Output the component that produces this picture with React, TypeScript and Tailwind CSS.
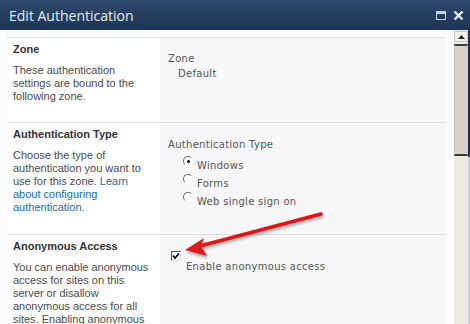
import React from 'react';

const leftFont = { fontFamily: '"Liberation Sans", Arial, sans-serif' };
const rightFont = { fontFamily: '"DejaVu Sans", Verdana, sans-serif' };

function Radio({ checked }: { checked?: boolean }) {
  return (
    <span className="relative inline-block shrink-0 w-[10px] h-[10px] rounded-full border border-t-[#6d6d6d] border-l-[#6d6d6d] border-r-white border-b-white bg-white">
      {checked && <span className="absolute left-[2.5px] top-[2.5px] w-[3px] h-[3px] rounded-full bg-black" />}
    </span>
  );
}

function Section({
  title,
  children,
  right,
  height,
}: {
  title: string;
  children: React.ReactNode;
  right: React.ReactNode;
  height: string;
}) {
  return (
    <div className={`flex border-t border-[#dedede] ${height}`}>
      <div className="w-[153px] pl-[6px] pr-2 pt-[4px]" style={leftFont}>
        <div className="text-[11px] font-bold text-[#333] leading-[14px]">{title}</div>
        <div className="mt-[8px] text-[11px] text-[#4a4a4a] leading-[13px]">{children}</div>
      </div>
      <div className="flex-1 bg-[#f7f6f8] pl-[8px] pt-[13px] text-[10px] text-[#555] tracking-[0.3px]" style={rightFont}>
        {right}
      </div>
    </div>
  );
}

export default function App() {
  return (
    <div className="relative w-[470px] h-[324px] overflow-hidden bg-white flex flex-col">
      {/* title bar */}
      <div className="h-[30px] flex items-center justify-between pl-[9px] pr-[6px] bg-gradient-to-b from-[#2e4a6f] to-[#1d3454]">
        <span className="text-[14px] text-[#e6ecf3]" style={{ fontFamily: '"Open Sans", Arial, sans-serif' }}>
          Edit Authentication
        </span>
        <div className="flex items-center gap-[7px]">
          <span className="w-[10px] h-[9px] border border-[#c8d2de] border-t-[3px]" />
          <svg width="11" height="11" viewBox="0 0 11 11">
            <path d="M1.5 1.5 L9.5 9.5 M9.5 1.5 L1.5 9.5" stroke="#e8eef5" strokeWidth="2.4" />
          </svg>
        </div>
      </div>

      <div className="flex flex-1 min-h-0">
        <div className="flex-1 pl-[7px] pr-[8px] pt-[7px] bg-[#f9fbfd]">
          <div className="bg-white">
            <Section title="Zone" height="h-[85px]" right={
              <div className="leading-[15px]">
                <div>Zone</div>
                <div className="pl-[10px]">Default</div>
              </div>
            }>
              These authentication settings are bound to the following zone.
            </Section>
            <Section title="Authentication Type" height="h-[112px]" right={
              <div className="mt-[2px]">
                <div className="leading-[14px]">Authentication Type</div>
                <div className="pl-[15px] mt-[4px] flex flex-col gap-[4px]">
                  {[['Windows', true], ['Forms', false], ['Web single sign on', false]].map(([l, c]) => (
                    <div key={l as string} className="flex items-start gap-[4px] h-[14px]">
                      <Radio checked={c as boolean} />
                      <span className="mt-[4px] leading-[12px]">{l}</span>
                    </div>
                  ))}
                </div>
              </div>
            }>
              <div>Choose the type of authentication you want to</div>
              <div className="flex gap-[3px]">
                <span>use for this zone.</span>
                <span className="text-[#1e6aa3]">Learn</span>
              </div>
              <div className="text-[#1e6aa3]">about configuring authentication.</div>
            </Section>
            <Section title="Anonymous Access" height="h-[100px]" right={
              <div className="mt-[1px] pl-[3px]">
                <span className="inline-flex items-center justify-center w-[10px] h-[10px] border border-t-[#555] border-l-[#555] border-r-[#ddd] border-b-[#ddd] bg-white">
                  <svg width="8" height="8" viewBox="0 0 8 8">
                    <path d="M1 3.5 L3 6 L7 1.5" stroke="#111" strokeWidth="1.8" fill="none" />
                  </svg>
                </span>
                <div className="pl-[15px] -mt-[3px] leading-[12px]">Enable anonymous access</div>
              </div>
            }>
              You can enable anonymous access for sites on this server or disallow anonymous access for all sites. Enabling anonymous
            </Section>
          </div>
        </div>

        {/* scrollbar */}
        <div className="w-[16px] flex">
          <div className="w-[14px] flex flex-col bg-[#ece9e3]">
            <div className="h-[11px] mt-[1px] flex items-center justify-center bg-[#f2f0ec] border border-[#cfcac2]">
              <svg width="7" height="4" viewBox="0 0 7 4"><path d="M0 4 L3.5 0 L7 4Z" fill="#222" /></svg>
            </div>
            <div className="h-[112px] mt-[2px] bg-[#d8d2ca] border-t-2 border-b-2 border-[#3b3b3b] border-x border-x-[#c9c2b8]" />
          </div>
          <div className="w-[2px] flex flex-col">
            <div className="h-[127px] bg-[#1f3a5e]" />
            <div className="flex-1 bg-[#bcd8ee]" />
          </div>
        </div>
      </div>

      {/* red arrow */}
      <svg className="absolute left-0 top-0 pointer-events-none" width="470" height="324">
        <defs>
          <filter id="sh" x="-20%" y="-50%" width="140%" height="200%">
            <feDropShadow dx="1" dy="2" stdDeviation="1.5" floodColor="#000" floodOpacity="0.35" />
          </filter>
        </defs>
        <g filter="url(#sh)">
          <path d="M321 214 L200 246" stroke="#d8161b" strokeWidth="3.5" strokeLinecap="round" />
          <path d="M185 250 L204 238 L201 246 L207 256 Z" fill="#dc1a1f" />
        </g>
      </svg>
    </div>
  );
}
